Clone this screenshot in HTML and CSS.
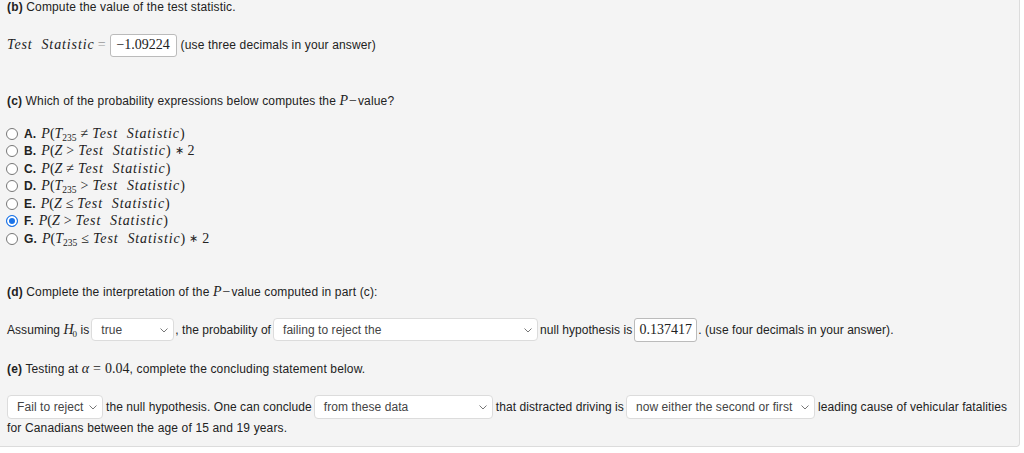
FILE: index.html
```html
<!DOCTYPE html>
<html>
<head>
<meta charset="utf-8">
<link rel="stylesheet" href="styles.css">
</head>
<body>
<div class="panel">
  <p class="q q-b"><b>(b)</b> Compute the value of the test statistic.</p>

  <div class="row row-ts">
    <span class="m it w">Test&nbsp;&nbsp;Statistic</span><span class="m eq">=</span>
    <span class="box ts-box"><span class="m">−1.09224</span></span>
    <span class="note">(use three decimals in your answer)</span>
  </div>

  <p class="q q-c"><b>(c)</b> Which of the probability expressions below computes the <span class="m it">P</span><span class="m minus">−</span>value?</p>

  <ul class="opts">
    <li><span class="radio"></span><b>A.</b><span class="m"><i>P</i>(<i>T</i><sub>235</sub><span class="rel">≠</span><i class="w">Test&nbsp;&nbsp;Statistic</i>)</span></li>
    <li><span class="radio"></span><b>B.</b><span class="m"><i>P</i>(<i>Z</i><span class="rel">&gt;</span><i class="w">Test&nbsp;&nbsp;Statistic</i>)<span class="ast">∗</span>2</span></li>
    <li><span class="radio"></span><b>C.</b><span class="m"><i>P</i>(<i>Z</i><span class="rel">≠</span><i class="w">Test&nbsp;&nbsp;Statistic</i>)</span></li>
    <li><span class="radio"></span><b>D.</b><span class="m"><i>P</i>(<i>T</i><sub>235</sub><span class="rel">&gt;</span><i class="w">Test&nbsp;&nbsp;Statistic</i>)</span></li>
    <li><span class="radio"></span><b>E.</b><span class="m"><i>P</i>(<i>Z</i><span class="rel">≤</span><i class="w">Test&nbsp;&nbsp;Statistic</i>)</span></li>
    <li><span class="radio on"></span><b>F.</b><span class="m"><i>P</i>(<i>Z</i><span class="rel">&gt;</span><i class="w">Test&nbsp;&nbsp;Statistic</i>)</span></li>
    <li><span class="radio"></span><b>G.</b><span class="m"><i>P</i>(<i>T</i><sub>235</sub><span class="rel">≤</span><i class="w">Test&nbsp;&nbsp;Statistic</i>)<span class="ast">∗</span>2</span></li>
  </ul>

  <p class="q q-d"><b>(d)</b> Complete the interpretation of the <span class="m it">P</span><span class="m minus">−</span>value computed in part (c):</p>

  <div class="row row-d">
    <span>Assuming <span class="m"><i>H</i><sub class="s0">0</sub></span> is</span>
    <span class="sel sel-true">true<svg class="chev" viewBox="0 0 8 5"><path d="M0.5 0.5 L4 4 L7.5 0.5"/></svg></span>
    <span class="tight">, the probability of</span>
    <span class="sel sel-fail">failing to reject the<svg class="chev" viewBox="0 0 8 5"><path d="M0.5 0.5 L4 4 L7.5 0.5"/></svg></span>
    <span>null hypothesis is</span>
    <span class="box pv-box"><span class="m">0.137417</span></span>
    <span class="tight">. (use four decimals in your answer).</span>
  </div>

  <p class="q q-e"><b>(e)</b> Testing at <span class="m"><i>α</i><span class="rel">=</span>0.04</span>, complete the concluding statement below.</p>

  <div class="row row-e">
    <span class="sel sel-rej">Fail to reject<svg class="chev" viewBox="0 0 8 5"><path d="M0.5 0.5 L4 4 L7.5 0.5"/></svg></span>
    <span class="txt">the null hypothesis. One can conclude</span>
    <span class="sel sel-data">from these data<svg class="chev" viewBox="0 0 8 5"><path d="M0.5 0.5 L4 4 L7.5 0.5"/></svg></span>
    <span class="txt">that distracted driving is</span>
    <span class="sel sel-now">now either the second or first<svg class="chev" viewBox="0 0 8 5"><path d="M0.5 0.5 L4 4 L7.5 0.5"/></svg></span>
    <span class="txt">leading cause of vehicular fatalities</span>
  </div>
  <p class="tail">for Canadians between the age of 15 and 19 years.</p>
</div>
</body>
</html>
```

FILE: styles.css
```css
html, body {
  margin: 0;
  padding: 0;
  background: #ffffff;
}
body {
  font-family: "Liberation Sans", Arial, sans-serif;
  font-size: 12px;
  letter-spacing: 0.15px;
  color: #222;
}
.panel {
  width: 1020px;
  height: 447px;
  box-sizing: border-box;
  padding: 0 0 0 7px;
  background: #f4f4f4;
  border-right: 1px solid #dcdcdc;
  border-bottom: 1px solid #dcdcdc;
  border-bottom-right-radius: 4px;
}
p { margin: 0; }
b { font-weight: 700; }
.m {
  font-family: "Liberation Serif", "Times New Roman", serif;
  font-size: 14px;
  letter-spacing: 0;
}
.m i, .it { font-style: italic; }
.w { letter-spacing: 0.9px; }
.minus { margin: 0 1px; }
.rel { margin: 0 4px; }
.ast { margin: 0 4px; font-size: 11px; position: relative; top: -1px; }
sub {
  font-size: 9.5px;
  vertical-align: -3px;
  line-height: 0;
  letter-spacing: 0;
}
sub.s0 { font-size: 9px; margin-left: -1px; }
.q-b { padding-top: 1px; line-height: 13px; }
.row { display: flex; align-items: center; white-space: nowrap; }
.row-ts { margin-top: 19px; height: 24px; }
.eq { color: #999; margin: 0 4px 0 3px; }
.box {
  display: inline-flex;
  align-items: center;
  justify-content: center;
  background: #fff;
  border: 1px solid #bbb;
  border-radius: 3px;
  box-sizing: border-box;
  height: 23px;
  padding: 0 3px;
  margin-right: 4px;
}
.ts-box { width: 67px; }
.q-c { margin-top: 37px; line-height: 14px; }
.opts { list-style: none; margin: 17px 0 0 0; padding: 0; }
.opts li {
  display: flex;
  align-items: center;
  height: 17.5px;
  white-space: pre;
}
.opts li b { margin-right: 5px; }
.radio {
  width: 12px;
  height: 12px;
  border: 1px solid #777;
  border-radius: 50%;
  box-sizing: border-box;
  background: #fff;
  margin: 0 6px 0 -1px;
}
.radio.on {
  border: 1px solid #1a73e8;
  background: #1a73e8;
  box-shadow: inset 0 0 0 2px #fff;
}
.q-d { margin-top: 37px; line-height: 14px; }
.row-d { margin-top: 19px; height: 24px; letter-spacing: 0.05px; }
.row-d > span + span { margin-left: 2px; }
.row-d > span.tight { margin-left: 1px; }
.sel {
  position: relative;
  display: inline-flex;
  align-items: center;
  box-sizing: border-box;
  height: 23px;
  background: #fff;
  border: 1px solid #dcdcdc;
  border-radius: 4px;
  padding: 0 0 0 9px;
  color: #444;
}
.chev {
  position: absolute;
  right: 5px;
  top: 9px;
  width: 8px;
  height: 5px;
  fill: none;
  stroke: #777;
  stroke-width: 1;
}
.sel-true { width: 83px; }
.sel-fail { width: 265px; }
.pv-box { width: 63px; height: 24px; margin-right: 0; }
.q-e { margin-top: 20px; line-height: 14px; }
.row-e { margin-top: 19px; height: 25px; letter-spacing: 0.08px; }
.row-e > .txt { margin-left: 3px; margin-right: 2px; }
.sel-rej { width: 96px; height: 24px; }
.sel-data { width: 179px; height: 24px; }
.sel-now { width: 189px; height: 24px; }
.tail { margin-top: 2px; line-height: 13px; letter-spacing: 0.15px; }
```
